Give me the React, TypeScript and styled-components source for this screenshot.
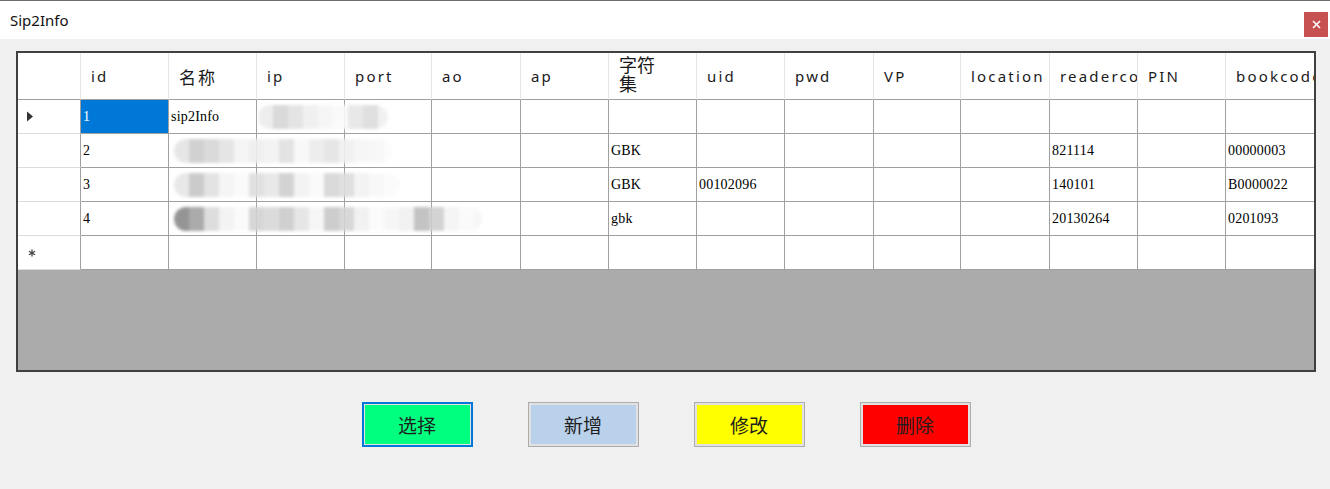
import React from 'react'
import styled, { createGlobalStyle } from 'styled-components'

const GlobalStyle = createGlobalStyle`
  html, body {
    margin: 0;
    padding: 0;
    background: #f0f0f0;
    font-family: 'Noto Sans', 'Noto Sans CJK SC', sans-serif;
  }
`

const Window = styled.div`
  width: 1330px;
  height: 489px;
  display: flex;
  flex-direction: column;
  background: #f0f0f0;
  overflow: hidden;
`

const TitleBar = styled.div`
  height: 38px;
  border-top: 1px solid #6e6e6e;
  background: #ffffff;
  display: flex;
  align-items: center;
  justify-content: space-between;
  padding: 0 2px 0 10px;
`

const Title = styled.span`
  font-size: 15px;
  color: #111;
  margin-top: -1px;
`

const CloseButton = styled.div`
  width: 24px;
  height: 25px;
  margin-top: 8px;
  background: #c75050;
  display: flex;
  align-items: center;
  justify-content: center;
`

const Body = styled.div`
  flex: 1;
  display: flex;
  flex-direction: column;
  padding: 12px 14px 0 16px;
`

const Grid = styled.div`
  width: 1300px;
  height: 321px;
  box-sizing: border-box;
  border: 2px solid #404040;
  background: #ababab;
  overflow: hidden;
`

const HeaderRow = styled.div`
  display: flex;
  height: 47px;
`

const HeaderCell = styled.div<{ w: number; cjk?: boolean }>`
  flex: 0 0 ${({ w }) => w}px;
  box-sizing: border-box;
  background: #ffffff;
  border-right: 1px solid #e6e6e6;
  border-bottom: 1px solid #a0a0a0;
  padding-left: 10px;
  display: flex;
  align-items: center;
  overflow: hidden;
  white-space: nowrap;
  font-family: 'Noto Sans', 'Noto Sans CJK SC', sans-serif;
  font-size: ${({ cjk }) => (cjk ? '17px' : '15px')};
  letter-spacing: ${({ cjk }) => (cjk ? '2px' : '2.2px')};
  color: #1a1a1a;
`

const HeaderStack = styled.span`
  line-height: 19px;
  font-size: 18px;
  letter-spacing: 0;
  white-space: normal;
  margin-top: -3px;
`

const DataRow = styled.div`
  display: flex;
  height: 34px;
  position: relative;
`

const RowHead = styled.div`
  flex: 0 0 63px;
  box-sizing: border-box;
  background: #ffffff;
  border-right: 1px solid #a0a0a0;
  border-bottom: 1px solid #dcdcdc;
  display: flex;
  align-items: center;
  padding-left: 8px;
`

const Cell = styled.div<{ w: number; selected?: boolean }>`
  flex: 0 0 ${({ w }) => w}px;
  box-sizing: border-box;
  background: ${({ selected }) => (selected ? '#0078d7' : '#ffffff')};
  color: ${({ selected }) => (selected ? '#ffffff' : '#000000')};
  border-right: 1px solid #a0a0a0;
  border-bottom: 1px solid #a0a0a0;
  padding-left: 2px;
  display: flex;
  align-items: center;
  overflow: hidden;
  white-space: nowrap;
  font-family: 'Liberation Serif', 'Noto Sans CJK SC', serif;
  font-size: 14px;
  letter-spacing: 0.2px;
`

const Mosaic = styled.div`
  position: absolute;
  top: 5px;
  height: 24px;
  border-radius: 12px;
  filter: blur(1.6px);
  opacity: 0.9;
`

const ButtonRow = styled.div`
  display: flex;
  justify-content: center;
  gap: 55px;
  margin-top: 30px;
`

const ActionButton = styled.button<{ bg: string; focused?: boolean }>`
  width: 111px;
  height: 45px;
  box-sizing: border-box;
  border: ${({ focused }) => (focused ? '2px solid #0078d7' : '1px solid #adadad')};
  box-shadow: inset 0 0 0 ${({ focused }) => (focused ? '1px' : '2px')} #e1e1e1;
  background: ${({ bg }) => bg};
  font-family: 'Noto Sans CJK SC', sans-serif;
  font-size: 19px;
  color: #1e1e1e;
  padding: 0;
  cursor: pointer;
`

const columns = [
  { key: 'id', label: 'id', w: 88 },
  { key: 'name', label: '名称', w: 88 },
  { key: 'ip', label: 'ip', w: 88 },
  { key: 'port', label: 'port', w: 87 },
  { key: 'ao', label: 'ao', w: 89 },
  { key: 'ap', label: 'ap', w: 88 },
  { key: 'charset', label: '字符集', w: 88 },
  { key: 'uid', label: 'uid', w: 88 },
  { key: 'pwd', label: 'pwd', w: 89 },
  { key: 'vp', label: 'VP', w: 87 },
  { key: 'location', label: 'location', w: 89 },
  { key: 'readercode', label: 'readercode', w: 88 },
  { key: 'pin', label: 'PIN', w: 88 },
  { key: 'bookcode', label: 'bookcode', w: 89 },
]

type Row = Record<string, string>

const rows: { data: Row; blob: [number, number]; tones: string[] }[] = [
  {
    data: { id: '1', name: 'sip2Info' },
    blob: [240, 130],
    tones: ['#ececec', '#d6d6d6', '#e2e2e2', '#efefef', '#f6f6f6', '#fafafa', '#e6e6e6', '#dcdcdc', '#f0f0f0'],
  },
  {
    data: { id: '2', charset: 'GBK', readercode: '821114', bookcode: '00000003' },
    blob: [156, 218],
    tones: ['#e4e4e4', '#cdcdcd', '#d6d6d6', '#e3e3e3', '#f4f4f4', '#eeeeee', '#f2f2f2', '#e0e0e0', '#f8f8f8', '#ececec', '#e4e4e4', '#f0f0f0', '#f6f6f6', '#f8f8f8', '#fbfbfb'],
  },
  {
    data: { id: '3', charset: 'GBK', uid: '00102096', readercode: '140101', bookcode: 'B0000022' },
    blob: [156, 226],
    tones: ['#e6e6e6', '#c6c6c6', '#e0e0e0', '#f4f4f4', '#fafafa', '#dedede', '#e6e6e6', '#cfcfcf', '#f2f2f2', '#fafafa', '#d6d6d6', '#dcdcdc', '#f2f2f2', '#f8f8f8', '#fbfbfb'],
  },
  {
    data: { id: '4', charset: 'gbk', readercode: '20130264', bookcode: '0201093' },
    blob: [156, 308],
    tones: ['#8a8a8a', '#a2a2a2', '#dadada', '#f2f2f2', '#fafafa', '#d2d2d2', '#d8d8d8', '#cccccc', '#e4e4e4', '#f6f6f6', '#c8c8c8', '#d4d4d4', '#f0f0f0', '#fbfbfb', '#f6f6f6', '#f0f0f0', '#bdbdbd', '#cfcfcf', '#f4f4f4', '#fafafa'],
  },
]

function mosaicBackground(tones: string[]) {
  const step = 15
  const stops = tones.map((c, i) => `${c} ${i * step}px ${(i + 1) * step}px`).join(', ')
  return `linear-gradient(to right, ${stops}, #f6f6f6 ${tones.length * step}px)`
}

function Arrow() {
  return (
    <svg width="8" height="11" viewBox="0 0 8 11">
      <polygon points="1,0.5 7,5.5 1,10.5" fill="#333" />
    </svg>
  )
}

function NewRowMark() {
  return (
    <svg width="10" height="10" viewBox="0 0 10 10" style={{ marginLeft: 1 }}>
      <g stroke="#444" strokeWidth="1.3" strokeLinecap="round">
        <line x1="5" y1="2" x2="5" y2="8" />
        <line x1="2.4" y1="3.5" x2="7.6" y2="6.5" />
        <line x1="2.4" y1="6.5" x2="7.6" y2="3.5" />
      </g>
    </svg>
  )
}

export default function App() {
  return (
    <>
      <GlobalStyle />
      <Window>
        <TitleBar>
          <Title>Sip2Info</Title>
          <CloseButton>
            <svg width="9" height="9" viewBox="0 0 9 9">
              <g stroke="#fff" strokeWidth="1.6">
                <line x1="1" y1="1" x2="8" y2="8" />
                <line x1="8" y1="1" x2="1" y2="8" />
              </g>
            </svg>
          </CloseButton>
        </TitleBar>
        <Body>
          <Grid>
            <HeaderRow>
              <HeaderCell w={63} />
              {columns.map((c) => (
                <HeaderCell key={c.key} w={c.w} cjk={c.key === 'name'}>
                  {c.key === 'charset' ? (
                    <HeaderStack>
                      字符
                      <br />集
                    </HeaderStack>
                  ) : (
                    c.label
                  )}
                </HeaderCell>
              ))}
            </HeaderRow>
            {rows.map((r, i) => (
              <DataRow key={i}>
                <RowHead>{i === 0 && <Arrow />}</RowHead>
                {columns.map((c) => (
                  <Cell key={c.key} w={c.w} selected={i === 0 && c.key === 'id'}>
                    {r.data[c.key] ?? ''}
                  </Cell>
                ))}
                <Mosaic
                  style={{ left: r.blob[0], width: r.blob[1], background: mosaicBackground(r.tones) }}
                />
              </DataRow>
            ))}
            <DataRow>
              <RowHead>
                <NewRowMark />
              </RowHead>
              {columns.map((c) => (
                <Cell key={c.key} w={c.w} />
              ))}
            </DataRow>
          </Grid>
          <ButtonRow>
            <ActionButton bg="#00ff7f" focused>
              选择
            </ActionButton>
            <ActionButton bg="#b9d1ea">新增</ActionButton>
            <ActionButton bg="#ffff00">修改</ActionButton>
            <ActionButton bg="#ff0000">删除</ActionButton>
          </ButtonRow>
        </Body>
      </Window>
    </>
  )
}
